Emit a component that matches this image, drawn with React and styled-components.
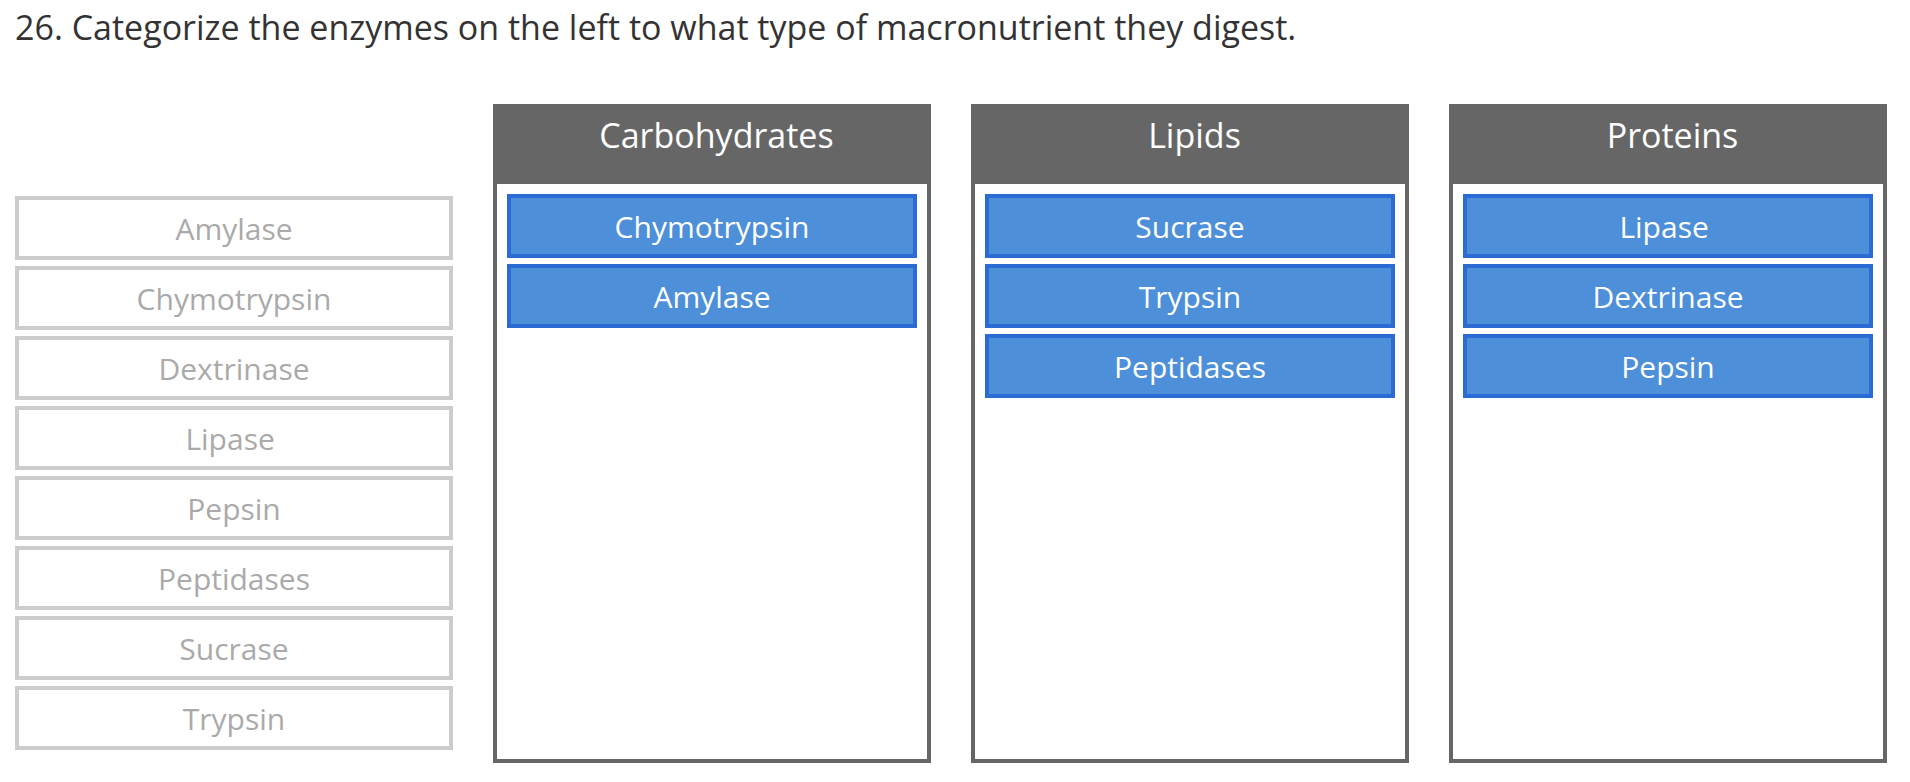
import React from "react";
import styled, { createGlobalStyle } from "styled-components";

const GlobalStyle = createGlobalStyle`
  html, body {
    margin: 0;
    padding: 0;
    background: #ffffff;
  }
  body {
    font-family: "Open Sans", "Noto Sans", "Liberation Sans", sans-serif;
    -webkit-font-smoothing: antialiased;
  }
  * { box-sizing: border-box; }
`;

const Page = styled.div`
  padding: 0 15px;
`;

const Prompt = styled.h1`
  margin: 0;
  padding-top: 6px;
  height: 104px;
  font-size: 34px;
  line-height: 42px;
  font-weight: 400;
  color: #333333;
`;

const Board = styled.div`
  display: flex;
  align-items: flex-start;
  gap: 40px;
`;

const Pool = styled.div`
  width: 438px;
  padding-top: 92px;
  display: flex;
  flex-direction: column;
  gap: 6px;
`;

const Bucket = styled.div`
  width: 438px;
  height: 659px;
  border: 4px solid #666666;
  display: flex;
  flex-direction: column;
`;

const BucketHead = styled.div`
  height: 76px;
  flex: none;
  background: #666666;
  color: #ffffff;
  font-size: 34px;
  line-height: 40px;
  text-align: center;
  padding: 7px 0 0 9px;
`;

const BucketBody = styled.div`
  flex: 1;
  padding: 10px;
  display: flex;
  flex-direction: column;
  gap: 6px;
`;

const Chip = styled.div`
  height: 64px;
  flex: none;
  display: flex;
  align-items: center;
  justify-content: center;
  font-size: 30px;
  white-space: pre;
  border: 4px solid ${(p) => (p.$placed ? "#2d6bd4" : "#cccccc")};
  background: ${(p) => (p.$placed ? "#4d8fd9" : "#ffffff")};
  color: ${(p) => (p.$placed ? "#ffffff" : "#aaaaaa")};
`;

const enzymes = [
  "Amylase",
  "Chymotrypsin",
  "Dextrinase",
  "Lipase ",
  "Pepsin",
  "Peptidases",
  "Sucrase",
  "Trypsin",
];

const buckets = [
  { title: "Carbohydrates", items: ["Chymotrypsin", "Amylase"] },
  { title: "Lipids", items: ["Sucrase", "Trypsin", "Peptidases"] },
  { title: "Proteins", items: ["Lipase ", "Dextrinase", "Pepsin"] },
];

export default function App() {
  return (
    <Page>
      <GlobalStyle />
      <Prompt>
        26. Categorize the enzymes on the left to what type of macronutrient they digest.
      </Prompt>
      <Board>
        <Pool>
          {enzymes.map((name) => (
            <Chip key={name}>{name}</Chip>
          ))}
        </Pool>
        {buckets.map((b) => (
          <Bucket key={b.title}>
            <BucketHead>{b.title}</BucketHead>
            <BucketBody>
              {b.items.map((name) => (
                <Chip key={name} $placed>
                  {name}
                </Chip>
              ))}
            </BucketBody>
          </Bucket>
        ))}
      </Board>
    </Page>
  );
}
